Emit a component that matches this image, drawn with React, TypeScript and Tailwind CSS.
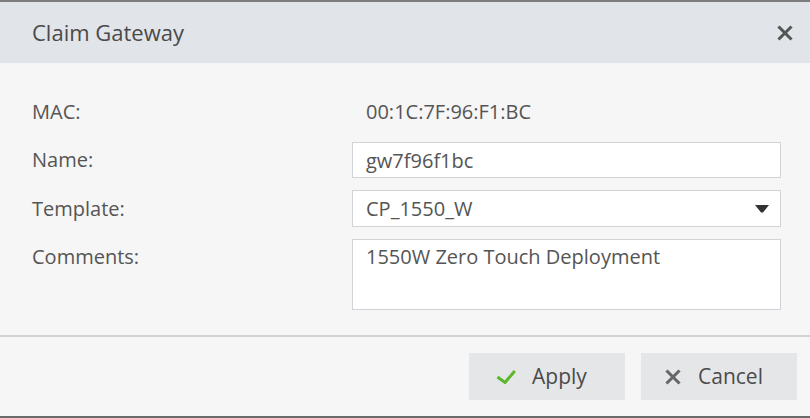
// Small drawn icons to match the dialog glyphs
function CloseIcon({ className }: { className?: string }) {
  return (
    <svg viewBox="0 0 16 16" className={className} fill="none" stroke="currentColor" strokeWidth="3" strokeLinecap="square">
      <path d="M2.5 2.5 L13.5 13.5 M13.5 2.5 L2.5 13.5" />
    </svg>
  );
}

function CheckIcon({ className }: { className?: string }) {
  return (
    <svg viewBox="0 0 20 14" className={className} fill="none" stroke="currentColor" strokeWidth="3" strokeLinejoin="miter">
      <path d="M1.5 7 L9 12.5 L18.8 1" />
    </svg>
  );
}

function Caret({ className }: { className?: string }) {
  return (
    <svg viewBox="0 0 14 8" className={className} fill="currentColor">
      <path d="M0 0 H14 L8 7.5 H6 Z" />
    </svg>
  );
}

const labelCls = "text-[20px] text-[#555555] leading-[28px]";
const fieldCls =
  "w-full bg-white border border-[#d0d4d9] px-[13px] text-[20px] text-[#555555] outline-none";

export default function App() {
  return (
    <div
      className="w-[810px] h-[418px] flex flex-col bg-[#f6f6f6] border-t-2 border-t-[#7d7d7d] border-b-2 border-b-[#6b6b6b]"
      style={{ fontFamily: '"Open Sans", "Liberation Sans", sans-serif' }}
    >
      <div className="h-[61px] shrink-0 bg-[#e1e4e9] flex items-center justify-between pl-[32px] pr-[17px]">
        <span className="text-[22px] text-[#4a4a4a]">Claim Gateway</span>
        <CloseIcon className="w-4 h-4 text-[#555555]" />
      </div>

      <div className="flex-1 pt-[31px] pl-[32px] pr-[29px]">
        <div className="grid grid-cols-[320px_1fr] gap-y-[12px]">
          <div className="h-[36px] flex items-center">
            <span className={labelCls}>MAC:</span>
          </div>
          <div className="h-[36px] flex items-center pl-[14px]">
            <span className={labelCls}>00:1C:7F:96:F1:BC</span>
          </div>

          <div className="h-[36px] flex items-center">
            <span className={labelCls}>Name:</span>
          </div>
          <input className={`${fieldCls} h-[36px]`} defaultValue="gw7f96f1bc" />

          <div className="h-[37px] flex items-center">
            <span className={labelCls}>Template:</span>
          </div>
          <div className={`${fieldCls} h-[37px] flex items-center justify-between pr-[11px]`}>
            <span className="leading-[28px]">CP_1550_W</span>
            <Caret className="w-[14px] h-[8px] text-[#333333]" />
          </div>

          <div className="pt-[4px]">
            <span className={labelCls}>Comments:</span>
          </div>
          <textarea
            className={`${fieldCls} h-[71px] resize-none pt-[3px] leading-[28px]`}
            defaultValue="1550W Zero Touch Deployment"
          />
        </div>
      </div>

      <div className="shrink-0 border-t-2 border-t-[#d3d3d3] flex justify-end gap-4 pt-[16px] pb-[16px] pr-[13px]">
        <button className="w-[156px] h-[47px] bg-[#e5e6e8] flex items-center pl-[27px] gap-4 text-[21px] text-[#4a4a4a]">
          <CheckIcon className="w-5 h-[14px] text-[#5cb82a]" />
          <span>Apply</span>
        </button>
        <button className="w-[156px] h-[47px] bg-[#e5e6e8] flex items-center pl-[24px] gap-[17px] text-[21px] text-[#4a4a4a]">
          <CloseIcon className="w-4 h-4 text-[#666666]" />
          <span>Cancel</span>
        </button>
      </div>
    </div>
  );
}
